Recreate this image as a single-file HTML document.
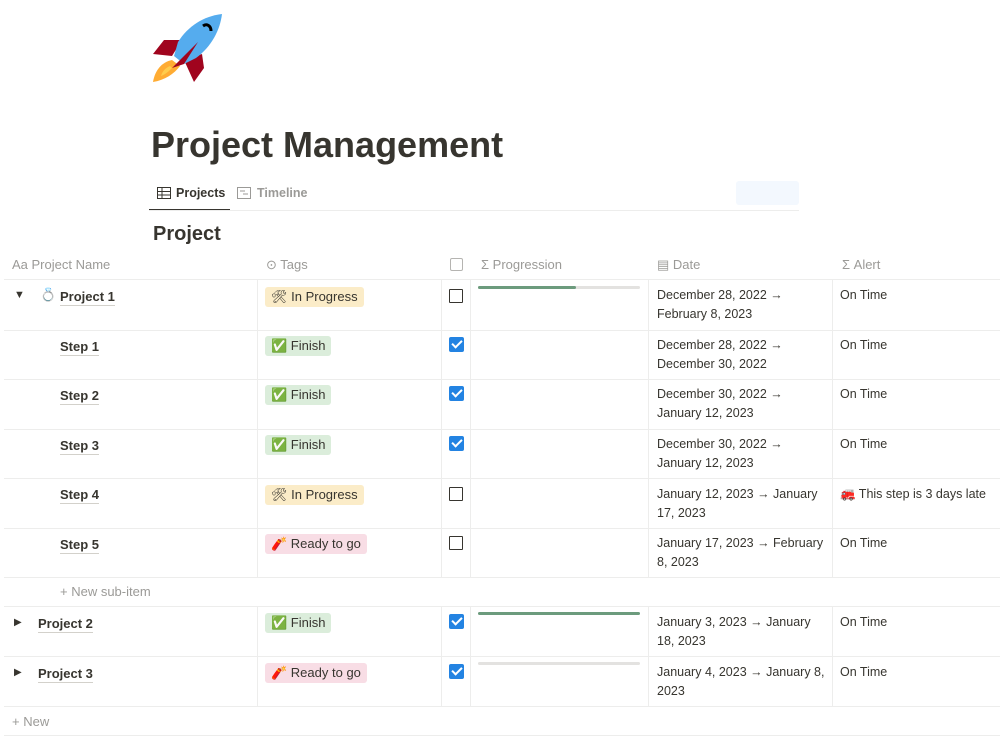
<!DOCTYPE html>
<html><head><meta charset="utf-8"><style>
body{margin:0;width:1000px;height:750px;background:#fff;font-family:"Liberation Sans",sans-serif;color:#37352f;position:relative;overflow:hidden;font-size:13px}
.a{position:absolute}
.h{color:#9b9a97;font-size:13px}
.vl{position:absolute;width:1px;background:#ededec}
.hl{position:absolute;height:1px;background:#ededec;left:4px;width:996px}
.nm{position:absolute;font-weight:bold;font-size:13px;border-bottom:1px solid #d3d1cb;line-height:17px}
.tag{position:absolute;left:265px;height:20px;line-height:20px;padding:0 6px;border-radius:3px;font-size:13px;white-space:nowrap;color:#37352f}
.ip{background:#fbecc8}.fi{background:#dbeddb}.rd{background:#f8dde5}
.cb{position:absolute;left:449px;width:12px;height:12px;border:1.5px solid #37352f;border-radius:1px}
.ck{position:absolute;left:449px;width:15px;height:15px;background:#2383e2;border-radius:2px}
.ck::after{content:"";position:absolute;left:3px;top:3px;width:8px;height:4px;border-left:2px solid #fff;border-bottom:2px solid #fff;transform:rotate(-45deg)}
.dt{position:absolute;left:657px;width:176px;line-height:19px;font-size:12.5px;white-space:nowrap}
.al{position:absolute;left:840px;line-height:19px;font-size:12.5px;white-space:nowrap}
.bar{position:absolute;left:478px;width:162px;height:3px;background:#e3e2e0;border-radius:2px}
</style></head><body>
<svg class="a" style="left:150px;top:10px" width="80" height="80" viewBox="0 0 80 80">
<path d="M3 44 L14 30 L32 30 L22 46 Z" fill="#a0041e"/>
<path d="M34 50 L52 44 L54 58 L44 72 Z" fill="#a0041e"/>
<path d="M22 50 C12 52 5 60 3 72 C15 70 24 64 30 56 Z" fill="#ffac33"/>
<path d="M20 56 C15 58 12 62 11 66 C16 64 19 61 22 58 Z" fill="#ffcc4d"/>
<path d="M72 4 C54 6 38 16 28 32 L24 46 L34 54 L46 48 C62 36 70 20 72 4 Z" fill="#55acee"/>
<path d="M22 58 L48 32 L34 54 Z" fill="#a0041e"/>
<path d="M53 16 C57 13 61 16 61 21" stroke="#000" stroke-width="3" fill="none"/>
</svg>
<div class="a" style="left:151px;top:124px;font-size:36px;font-weight:bold;color:#37352f">Project Management</div>
<svg class="a" style="left:157px;top:187px" width="14" height="12"><rect x=".5" y=".5" width="13" height="11" fill="none" stroke="#37352f"/><path d="M0 4.5H14M0 8H14M5 0V12" stroke="#37352f"/></svg>
<div class="a" style="left:176px;top:186px;font-size:12.5px;font-weight:bold">Projects</div>
<svg class="a" style="left:237px;top:187px" width="14" height="12"><rect x=".5" y=".5" width="13" height="11" fill="none" stroke="#9b9a97"/><path d="M3 4H8M6 7H11" stroke="#9b9a97"/></svg>
<div class="a h" style="left:257px;top:186px;font-weight:bold;font-size:12.5px">Timeline</div>
<div class="a" style="left:149px;top:209px;width:81px;height:2px;background:#37352f"></div>
<div class="a" style="left:149px;top:210px;width:650px;height:1px;background:#ededec"></div>
<div class="a" style="left:736px;top:181px;width:63px;height:24px;background:#f3f8fe;border-radius:3px"></div>
<div class="a" style="left:153px;top:223px;font-size:20px;font-weight:bold">Project</div>
<div class="a h" style="left:12px;top:257px">Aa Project Name</div>
<div class="a h" style="left:266px;top:257px">⊙ Tags</div>
<div class="a" style="left:450px;top:258px;width:11px;height:11px;border:1px solid #b5b4b1;border-radius:2px"></div>
<div class="a h" style="left:481px;top:257px">Σ Progression</div>
<div class="a h" style="left:657px;top:257px">▤ Date</div>
<div class="a h" style="left:842px;top:257px">Σ Alert</div>
<div class="hl" style="top:279px"></div><div class="hl" style="top:330px"></div><div class="hl" style="top:379px"></div><div class="hl" style="top:429px"></div><div class="hl" style="top:478px"></div><div class="hl" style="top:528px"></div><div class="hl" style="top:577px"></div><div class="hl" style="top:606px"></div><div class="hl" style="top:656px"></div><div class="hl" style="top:706px"></div><div class="hl" style="top:735px"></div>
<div class="vl" style="left:257px;top:279px;height:298px"></div><div class="vl" style="left:441px;top:279px;height:298px"></div><div class="vl" style="left:470px;top:279px;height:298px"></div><div class="vl" style="left:648px;top:279px;height:298px"></div><div class="vl" style="left:832px;top:279px;height:298px"></div>
<div class="vl" style="left:257px;top:606px;height:100px"></div><div class="vl" style="left:441px;top:606px;height:100px"></div><div class="vl" style="left:470px;top:606px;height:100px"></div><div class="vl" style="left:648px;top:606px;height:100px"></div><div class="vl" style="left:832px;top:606px;height:100px"></div>
<div class="a" style="left:14px;top:289px;font-size:11px">▼</div>
<div class="a" style="left:40px;top:287px;font-size:13px;color:#8aa">💍</div>
<div class="nm" style="left:60px;top:288px">Project 1</div>
<div class="tag ip" style="top:287px">🛠 In Progress</div>
<div class="cb" style="top:289px"></div>
<div class="bar" style="top:286px"><div style="width:98px;height:3px;background:#6c9b7d;border-radius:2px"></div></div>
<div class="dt" style="top:286px">December 28, 2022 →<br>February 8, 2023</div>
<div class="al" style="top:286px">On Time</div>
<div class="nm" style="left:60px;top:338px">Step 1</div><div class="tag fi" style="top:336px">✅ Finish</div><div class="ck" style="top:337px"></div><div class="dt" style="top:336px">December 28, 2022 →<br>December 30, 2022</div><div class="al" style="top:336px">On Time</div>
<div class="nm" style="left:60px;top:387px">Step 2</div><div class="tag fi" style="top:385px">✅ Finish</div><div class="ck" style="top:386px"></div><div class="dt" style="top:385px">December 30, 2022 →<br>January 12, 2023</div><div class="al" style="top:385px">On Time</div>
<div class="nm" style="left:60px;top:437px">Step 3</div><div class="tag fi" style="top:435px">✅ Finish</div><div class="ck" style="top:436px"></div><div class="dt" style="top:435px">December 30, 2022 →<br>January 12, 2023</div><div class="al" style="top:435px">On Time</div>
<div class="nm" style="left:60px;top:486px">Step 4</div><div class="tag ip" style="top:485px">🛠 In Progress</div><div class="cb" style="top:487px"></div><div class="dt" style="top:485px">January 12, 2023 → January<br>17, 2023</div><div class="al" style="top:485px">🚒 This step is 3 days late</div>
<div class="nm" style="left:60px;top:536px">Step 5</div><div class="tag rd" style="top:534px">🧨 Ready to go</div><div class="cb" style="top:536px"></div><div class="dt" style="top:534px">January 17, 2023 → February<br>8, 2023</div><div class="al" style="top:534px">On Time</div>
<div class="a h" style="left:60px;top:584px">+ New sub-item</div>
<div class="a" style="left:14px;top:617px;font-size:10px">▶</div>
<div class="nm" style="left:38px;top:615px">Project 2</div><div class="tag fi" style="top:613px">✅ Finish</div><div class="ck" style="top:614px"></div>
<div class="bar" style="top:612px;background:#6c9b7d"></div>
<div class="dt" style="top:613px">January 3, 2023 → January<br>18, 2023</div><div class="al" style="top:613px">On Time</div>
<div class="a" style="left:14px;top:667px;font-size:10px">▶</div>
<div class="nm" style="left:38px;top:665px">Project 3</div><div class="tag rd" style="top:663px">🧨 Ready to go</div><div class="ck" style="top:664px"></div>
<div class="bar" style="top:662px"></div>
<div class="dt" style="top:663px">January 4, 2023 → January 8,<br>2023</div><div class="al" style="top:663px">On Time</div>
<div class="a h" style="left:12px;top:714px">+ New</div>
</body></html>
